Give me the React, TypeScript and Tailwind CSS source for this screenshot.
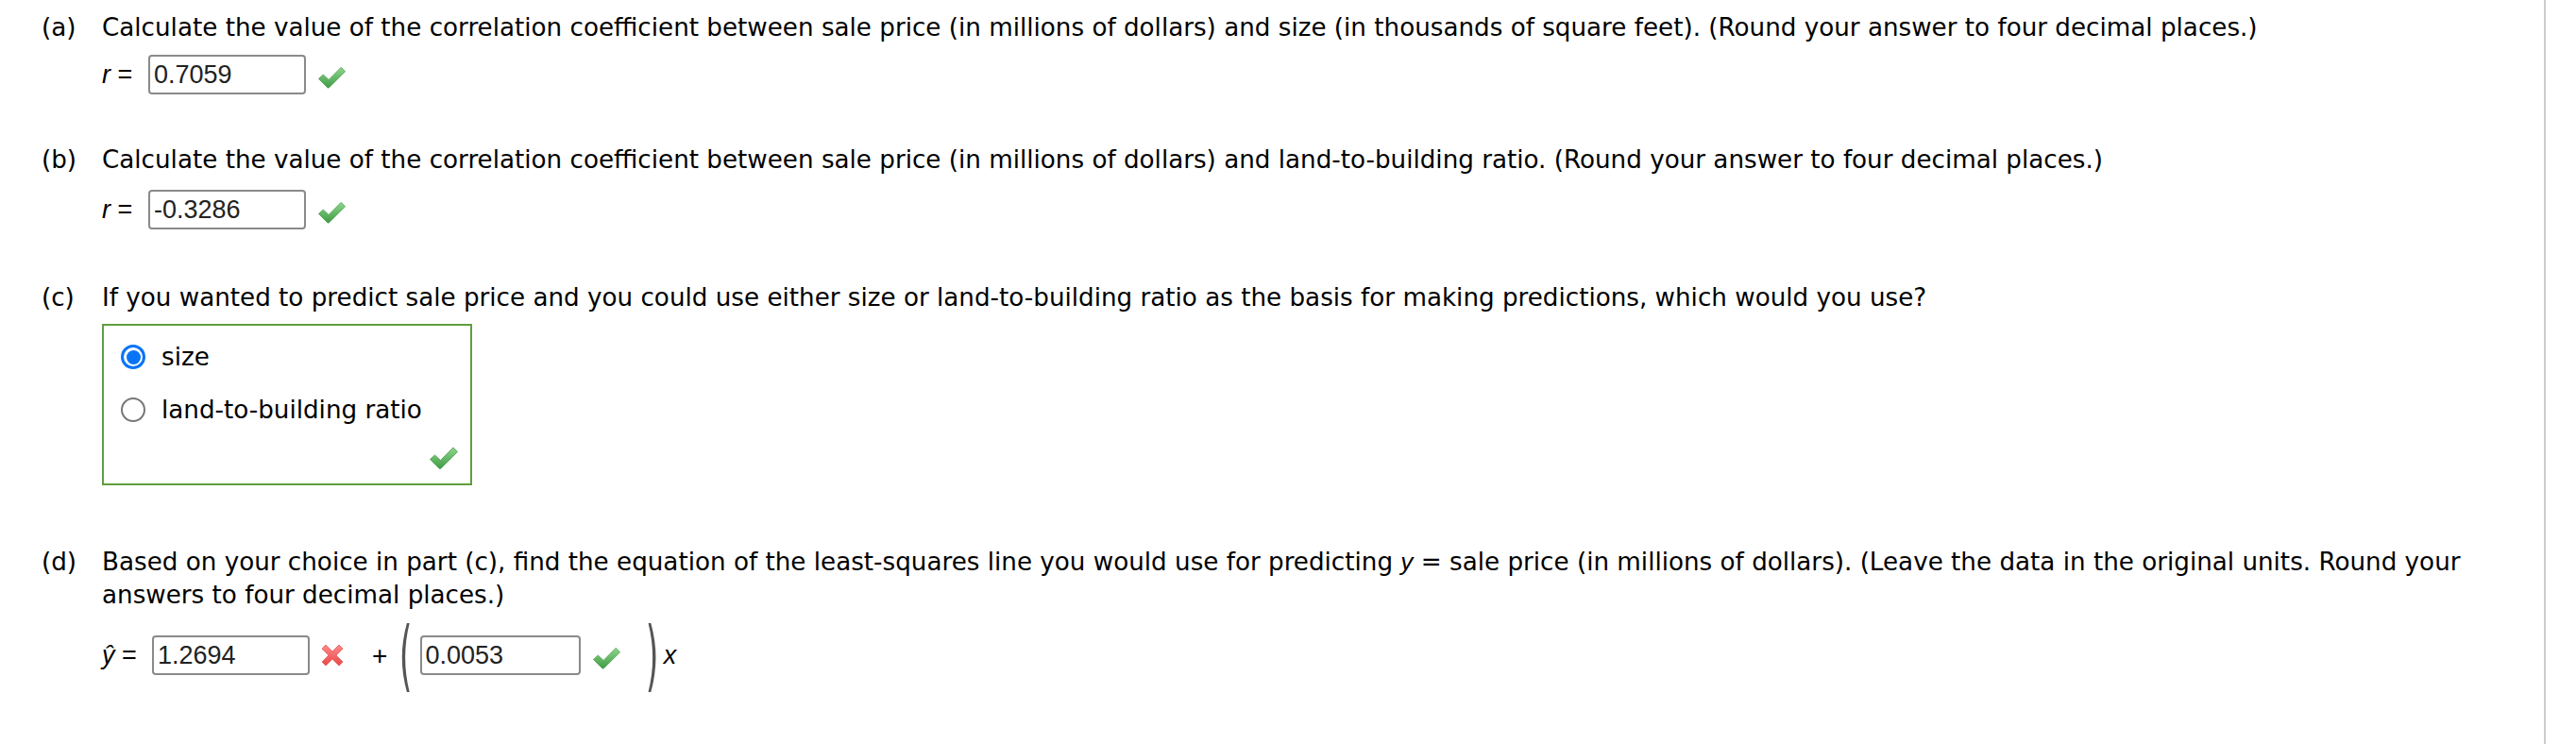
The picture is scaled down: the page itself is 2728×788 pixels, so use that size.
import React from "react";

const Check = ({ className = "" }: { className?: string }) => (
  <svg viewBox="0 0 32 26" className={className} aria-hidden>
    <defs>
      <linearGradient id="gchk" x1="0" y1="0" x2="0" y2="1">
        <stop offset="0" stopColor="#8fd68f" />
        <stop offset="1" stopColor="#3f9b43" />
      </linearGradient>
    </defs>
    <path
      d="M1.5 14.5 L6.5 10 L12.5 15.5 L26 2 L30.5 6.5 L13 24 Q12 25 11 24 Z"
      fill="url(#gchk)"
      stroke="#4a9f4c"
      strokeWidth="0.8"
      strokeLinejoin="round"
    />
  </svg>
);

const Cross = ({ className = "" }: { className?: string }) => (
  <svg viewBox="0 0 28 28" className={className} aria-hidden>
    <defs>
      <linearGradient id="gx" x1="0" y1="0" x2="0" y2="1">
        <stop offset="0" stopColor="#ff8a8a" />
        <stop offset="1" stopColor="#e84848" />
      </linearGradient>
    </defs>
    <path
      d="M3 7 L7 3 L14 10 L21 3 L25 7 L18 14 L25 21 L21 25 L14 18 L7 25 L3 21 L10 14 Z"
      fill="url(#gx)"
      stroke="#e65a5a"
      strokeWidth="0.8"
      strokeLinejoin="round"
    />
  </svg>
);

const arial = { fontFamily: '"Liberation Sans", Arial, sans-serif' };
const thin = { fontFamily: '"DejaVu Sans ExtraLight", "DejaVu Sans", sans-serif' };

const Field = ({ value, w = "w-[167px]" }: { value: string; w?: string }) => (
  <div
    className={`${w} h-[42px] border-2 border-[#8a8a8a] rounded-[4px] bg-white flex items-center pl-[4px] text-[27px] text-[#222]`}
    style={arial}
  >
    {value}
  </div>
);

const Part = ({
  label,
  children,
}: {
  label: string;
  children: React.ReactNode;
}) => (
  <div className="flex">
    <div className="w-[64px] shrink-0">{label}</div>
    <div className="flex-1 min-w-0">{children}</div>
  </div>
);

export default function App() {
  return (
    <div className="w-[2728px] h-[788px] bg-white overflow-hidden">
      <div
        className="w-[2696px] h-[788px] border-r-2 border-[#cccccc] pl-[44px] pr-[40px] pt-[12px] text-[26.2px] leading-[35px] text-black"
        style={{ fontFamily: '"DejaVu Sans", Verdana, sans-serif' }}
      >
        <Part label="(a)">
          <p>
            Calculate the value of the correlation coefficient between sale price (in millions of
            dollars) and size (in thousands of square feet). (Round your answer to four decimal
            places.)
          </p>
          <div className="flex items-center mt-[11px]">
            <span className="text-[27px] w-[49px]" style={arial}>
              <i>r</i> =
            </span>
            <Field value="0.7059" />
            <Check className="w-[31px] h-[26px] ml-[12px] mt-[6px]" />
          </div>
        </Part>

        <div className="h-[52px]" />

        <Part label="(b)">
          <p>
            Calculate the value of the correlation coefficient between sale price (in millions of
            dollars) and land-to-building ratio. (Round your answer to four decimal places.)
          </p>
          <div className="flex items-center mt-[14px]">
            <span className="text-[27px] w-[49px]" style={arial}>
              <i>r</i> =
            </span>
            <Field value="-0.3286" />
            <Check className="w-[31px] h-[26px] ml-[12px] mt-[6px]" />
          </div>
        </Part>

        <div className="h-[55px]" />

        <Part label="(c)">
          <p>
            If you wanted to predict sale price and you could use either size or land-to-building
            ratio as the basis for making predictions, which would you use?
          </p>
          <div className="mt-[10px] w-[392px] h-[171px] border-2 border-[#5f9e3e] relative pl-[18px] pt-[20px]">
            <div className="flex items-center h-[26px]">
              <span className="w-[26px] h-[26px] rounded-full border-[3px] border-[#0a74f6] bg-white flex items-center justify-center">
                <span className="w-[15px] h-[15px] rounded-full bg-[#0a74f6]" />
              </span>
              <span className="ml-[17px]">size</span>
            </div>
            <div className="flex items-center h-[26px] mt-[30px]">
              <span className="w-[26px] h-[26px] rounded-full border-2 border-[#777777] bg-white" />
              <span className="ml-[17px]">land-to-building ratio</span>
            </div>
            <Check className="absolute right-[12px] bottom-[14px] w-[32px] h-[26px]" />
          </div>
        </Part>

        <div className="h-[64px]" />

        <Part label="(d)">
          <p>
            <span>
              Based on your choice in part (c), find the equation of the least-squares line you
              would use for predicting{" "}
            </span>
            <i style={arial}>y</i>
            <span>
              {" "}
              = sale price (in millions of dollars). (Leave the data in the original units. Round
              your{" "}
            </span>
            <span className="inline-block">answers to four decimal places.)</span>
          </p>
          <div className="flex items-center mt-[7px] h-[78px]" style={arial}>
            <span className="text-[27px] w-[53px]">
              <i>ŷ</i> =
            </span>
            <Field value="1.2694" />
            <Cross className="w-[28px] h-[28px] ml-[10px]" />
            <span className="text-[28px] ml-[28px]">+</span>
            <span
              className="text-[44px] text-[#555] ml-[11px] inline-block scale-y-[1.85] scale-x-[0.8] leading-[40px]"
              style={thin}
            >
              (
            </span>
            <span className="ml-[6px]">
              <Field value="0.0053" w="w-[170px]" />
            </span>
            <Check className="w-[31px] h-[26px] ml-[12px] mt-[6px]" />
            <span
              className="text-[44px] text-[#555] ml-[24px] inline-block scale-y-[1.85] scale-x-[0.8] leading-[40px]"
              style={thin}
            >
              )
            </span>
            <i className="text-[27px] ml-[4px]">x</i>
          </div>
        </Part>
      </div>
    </div>
  );
}
